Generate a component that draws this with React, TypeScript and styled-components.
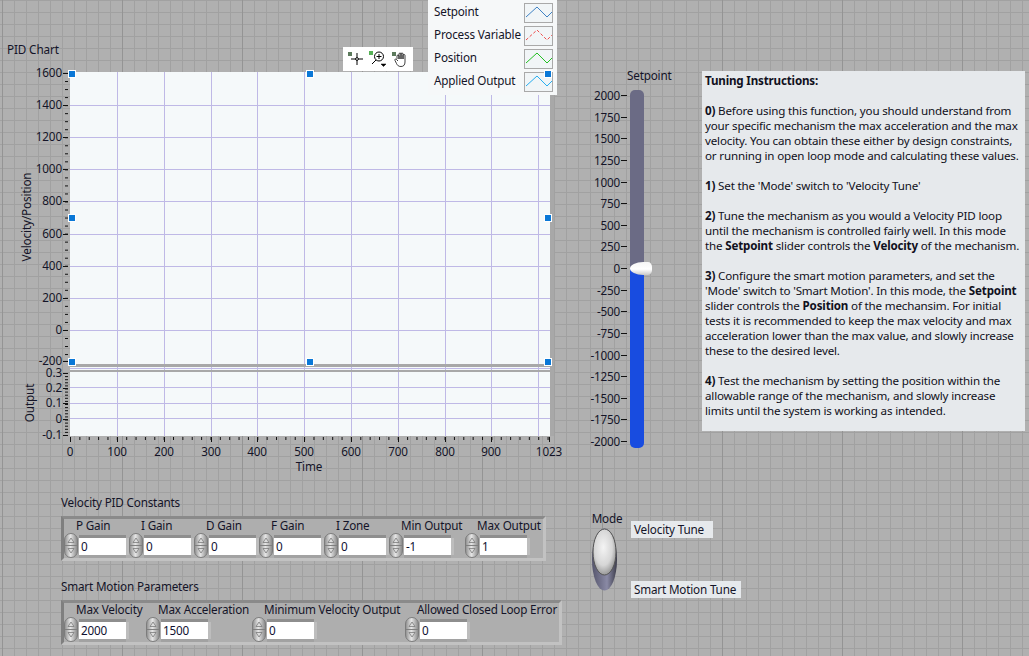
import React from "react";
import styled, { createGlobalStyle } from "styled-components";

const FONT = `"Noto Sans", "Open Sans", "Liberation Sans", sans-serif`;

const Global = createGlobalStyle`
  html, body { margin: 0; padding: 0; width: 1029px; height: 656px; overflow: hidden; }
  #root { width: 1029px; height: 656px; }
`;

const Panel = styled.main`
  position: relative;
  width: 1029px;
  height: 656px;
  overflow: hidden;
  color: #141428;
  font-family: ${FONT};
  font-size: 11.7px;
  letter-spacing: -0.18px;
  line-height: 15px;
  background-color: #b0b0b0;
  background-image:
    linear-gradient(to right, #949494 1px, transparent 1px),
    linear-gradient(to right, #a1a1a1 1px, transparent 1px),
    linear-gradient(to bottom, #a1a1a1 1px, transparent 1px);
  background-size: 120px 100%, 12px 12px, 12px 12px;
  background-position: 2px 0, 2px 0, 0 0;
`;

const ChartCanvas = styled.svg`
  position: absolute;
  left: 0;
  top: 40px;
  width: 565px;
  height: 440px;
  font-family: ${FONT};
  font-size: 11.7px;
  letter-spacing: -0.12px;
  fill: #141428;
`;

const HandleLayer = styled.svg`
  position: absolute;
  left: 0;
  top: 0;
  width: 565px;
  height: 370px;
  pointer-events: none;
`;

const Palette = styled.div`
  position: absolute;
  left: 343px;
  top: 47px;
  width: 70px;
  height: 24px;
  background: #ffffff;
  display: flex;
  align-items: center;
  justify-content: space-around;
  padding: 0 2px;
  box-sizing: border-box;
`;

const Legend = styled.div`
  position: absolute;
  left: 428px;
  top: 0;
  width: 129px;
  height: 95px;
  background: #f6f8f9;
  display: flex;
  flex-direction: column;
  box-sizing: border-box;
`;

const LegendRow = styled.div`
  height: 23px;
  display: flex;
  align-items: center;
  justify-content: space-between;
  padding: 0 4px 0 6px;
  white-space: nowrap;
`;

const LegendSwatch = styled.svg`
  width: 29px;
  height: 20px;
  flex: none;
  margin-top: 3px;
`;

const SliderBlock = styled.section`
  position: absolute;
  left: 580px;
  top: 68px;
  width: 100px;
  display: flex;
  flex-direction: column;
`;

const SliderTitle = styled.div`
  height: 15px;
  padding-left: 47px;
  margin-bottom: 7px;
`;

const SliderBody = styled.div`
  display: flex;
  height: 358px;
`;

const Scale = styled.div`
  width: 47px;
  margin: -2px 3px 0 0;
  height: 361px;
  display: flex;
  flex-direction: column;
  justify-content: space-between;
  align-items: flex-end;
`;

const ScaleRow = styled.div`
  height: 15px;
  display: flex;
  align-items: center;
  gap: 1px;
  &::after {
    content: "";
    width: 6px;
    height: 1px;
    background: #111;
  }
`;

const Track = styled.div`
  position: relative;
  width: 14px;
  height: 358px;
  display: flex;
  flex-direction: column;
`;

const TrackUpper = styled.div`
  flex: 1;
  background: #6b6b85;
  border-radius: 5px 5px 0 0;
`;

const TrackLower = styled.div`
  flex: 1;
  background: #184ce0;
  border-radius: 0 0 5px 5px;
`;

const Thumb = styled.div`
  position: absolute;
  left: 0;
  top: 172px;
  width: 22px;
  height: 13px;
  background: linear-gradient(to bottom, #f6f6f6 0%, #ffffff 55%, #c9c9c9 100%);
  border-radius: 60% 4px 4px 60% / 50% 5px 5px 50%;
`;

const Instructions = styled.section`
  position: absolute;
  left: 702px;
  top: 71px;
  width: 323px;
  height: 360px;
  box-sizing: border-box;
  padding: 2px 0 0 3px;
  background: #e6e9ec;
  font-size: 11.6px;
  letter-spacing: -0.17px;
  white-space: nowrap;
  color: #101020;
`;

const Para = styled.p`
  margin: 0 0 15px;
`;

const ClusterBlock = styled.section<{ $top: number; $width: number }>`
  position: absolute;
  left: 61px;
  top: ${(p) => p.$top}px;
  width: ${(p) => p.$width}px;
`;

const ClusterTitle = styled.div`
  height: 15px;
  margin-bottom: 6px;
`;

const ClusterFrame = styled.div`
  box-sizing: border-box;
  height: 45px;
  display: flex;
  background: #aeaeae;
  border-style: solid;
  border-width: 3px;
  border-color: #8a8a8a #c2c2c2 #c2c2c2 #7f7f7f;
`;

const Numeric = styled.div<{ $width: number }>`
  width: ${(p) => p.$width}px;
  flex: none;
  display: flex;
  flex-direction: column;
  margin-top: -1px;
`;

const NumericLabel = styled.div`
  height: 15px;
  padding-left: 12px;
  white-space: nowrap;
`;

const NumericRow = styled.div`
  display: flex;
  align-items: flex-start;
`;

const Spinner = styled.svg`
  width: 14px;
  height: 25px;
  flex: none;
  margin-right: 1px;
`;

const ValueBox = styled.div`
  box-sizing: border-box;
  width: 47px;
  height: 17px;
  margin-top: 5px;
  padding-left: 2px;
  background: #ffffff;
  line-height: 17px;
  color: #101030;
  box-shadow: 0 -3px 0 #8e8e8e, 3px 0 0 #bdbdbd, 0 3px 0 #a2a2a2;
`;

const ModeBlock = styled.section`
  position: absolute;
  left: 590px;
  top: 510px;
  width: 152px;
  height: 90px;
  display: grid;
  grid-template-columns: 41px 1fr;
  grid-template-rows: 18px 1fr;
`;

const ModeTitle = styled.div`
  grid-column: 1;
  grid-row: 1;
  text-align: center;
  padding-right: 7px;
  margin-top: 1px;
`;

const SwitchArt = styled.svg`
  grid-column: 1;
  grid-row: 2;
  width: 28px;
  height: 63px;
  margin-left: 1px;
`;

const ModeLabels = styled.div`
  grid-column: 2;
  grid-row: 1 / 3;
  display: flex;
  flex-direction: column;
  justify-content: space-between;
  align-items: flex-start;
  padding: 11px 0 2px;
`;

const ModeLabel = styled.div<{ $width: number }>`
  box-sizing: border-box;
  width: ${(p) => p.$width}px;
  height: 17px;
  line-height: 17px;
  padding-left: 3px;
  background: #e6e9ec;
  white-space: nowrap;
`;

const upperGrid = [105, 137, 169, 201, 234, 266, 298, 330];
const lowerGrid = [387, 403, 418];
const xLabels: [string, number][] = [
  ["0", 70], ["100", 117], ["200", 164], ["300", 211], ["400", 257], ["500", 304],
  ["600", 351], ["700", 398], ["800", 445], ["900", 491], ["1023", 549],
];
const yLabels: [string, number][] = [
  ["1600", 73], ["1400", 105], ["1200", 137], ["1000", 169], ["800", 201], ["600", 234],
  ["400", 266], ["200", 298], ["0", 330], ["-200", 361],
];
const y2Labels: [string, number][] = [["0.3", 373], ["0.2", 388], ["0.1", 403], ["0", 419], ["-0.1", 435]];

function Chart() {
  const xMinor: number[] = [];
  for (let v = 0; v <= 1023; v += 20) xMinor.push(70 + v * 0.4682);
  const yMinor: number[] = [];
  for (let i = 0; i < 36; i++) yMinor.push(73 + i * 8.03);
  const y2Minor: number[] = [];
  for (let i = 0; i < 20; i++) y2Minor.push(373 + i * 3.1);
  const grid = "#bfb9e6";
  return (
    <ChartCanvas viewBox="0 40 565 440">
      <text x={7} y={54}>PID Chart</text>
      <rect x={70} y={72} width={480} height={292} fill="#f5f9fa" />
      <rect x={70} y={372} width={480} height={64} fill="#f5f9fa" />
      <rect x={70} y={367} width={480} height={3} fill="#f5f9fa" />
      <rect x={70} y={364} width={480} height={3} fill="#a8a8a8" />
      <rect x={70} y={370} width={480} height={2} fill="#a8a8a8" />
      <rect x={70} y={368} width={480} height={1} fill={grid} />
      <rect x={550} y={72} width={4} height={364} fill="#a8a8a8" />
      {[...xLabels.slice(1, -1).map(([, x]) => x), 538].map((x) => (
        <g key={x} fill={grid}>
          <rect x={x} y={72} width={1} height={292} />
          <rect x={x} y={367} width={1} height={3} />
          <rect x={x} y={372} width={1} height={64} />
        </g>
      ))}
      {upperGrid.map((y) => <rect key={y} x={70} y={y} width={480} height={1} fill={grid} />)}
      {lowerGrid.map((y) => <rect key={y} x={70} y={y} width={480} height={1} fill={grid} />)}
      {yMinor.map((y) => <rect key={y} x={65} y={y} width={3} height={1} fill="#111" />)}
      {yLabels.map(([, y]) => <rect key={y} x={63} y={y} width={5} height={1} fill="#111" />)}
      {y2Minor.map((y) => <rect key={y} x={65} y={y} width={3} height={1} fill="#111" />)}
      {y2Labels.map(([, y]) => <rect key={y} x={63} y={y} width={5} height={1} fill="#111" />)}
      {xMinor.map((x) => <rect key={x} x={x} y={437} width={1} height={3} fill="#111" />)}
      {xLabels.map(([, x]) => <rect key={x} x={x} y={437} width={1} height={5} fill="#111" />)}
      {yLabels.map(([l, y]) => <text key={l} x={62} y={y + 4} textAnchor="end">{l}</text>)}
      {y2Labels.map(([l, y]) => <text key={l} x={62} y={y + 4} textAnchor="end">{l}</text>)}
      {xLabels.map(([l, x]) => <text key={l} x={x} y={456} textAnchor="middle">{l}</text>)}
      <text x={309} y={471} textAnchor="middle">Time</text>
      <text transform="translate(31 217) rotate(-90)" textAnchor="middle">Velocity/Position</text>
      <text transform="translate(34 403) rotate(-90)" textAnchor="middle">Output</text>
    </ChartCanvas>
  );
}

const legendItems = [
  { name: "Setpoint", color: "#3f82c4", dash: undefined },
  { name: "Process Variable", color: "#ef4a4a", dash: "3 2" },
  { name: "Position", color: "#22c022", dash: undefined },
  { name: "Applied Output", color: "#28aef0", dash: undefined },
];

function PaletteIcons() {
  return (
    <>
      <svg width="16" height="16" viewBox="0 0 16 16" fill="none">
        <rect x="0" y="1" width="4" height="4" fill="#5c7a5c" />
        <path d="M9 2v12M3 8h12" stroke="#000" />
        <circle cx="9" cy="8" r="1.4" fill="#fff" stroke="#000" />
      </svg>
      <svg width="18" height="18" viewBox="0 0 18 18" fill="none">
        <rect x="0" y="1" width="4" height="4" fill="#55b055" />
        <circle cx="10" cy="6.5" r="4.5" fill="#fff" stroke="#000" />
        <path d="M10 4v5M7.5 6.5h5M7 10l-4 4" stroke="#000" />
        <path d="M12 14h5l-2.5 2.5z" stroke="#000" fill="#000" strokeWidth=".5" />
      </svg>
      <svg width="17" height="17" viewBox="0 0 17 17" fill="none">
        <rect x="0" y="1" width="4" height="4" fill="#5c7a5c" />
        <path d="M5 8V5a1 1 0 0 1 2 0v3V3a1 1 0 0 1 2 0v5V3a1 1 0 0 1 2 0v5V4.500a1 1 0 0 1 2 0V11c0 3-1.500 4.500-4 4.500-2.500 0-3.500-1-4.500-3L3 9.500c-.7-1.200.8-2 1.500-1L6 10" stroke="#000" fill="#fff" strokeWidth=".75" />
      </svg>
    </>
  );
}

function SpinnerArt({ id }: { id: string }) {
  return (
    <Spinner viewBox="0 0 14 25">
      <defs>
        <linearGradient id={id} x1="0" x2="1" y1="0" y2="0">
          <stop offset="0" stopColor="#8c8c8c" />
          <stop offset=".45" stopColor="#e6e6e6" />
          <stop offset="1" stopColor="#868686" />
        </linearGradient>
      </defs>
      <rect x=".5" y=".5" width="13" height="24" rx="6.500" fill={`url(#${id})`} stroke="#7c7c7c" />
      <path d="M1 12.500h12" stroke="#808080" />
      <path d="M7 5l3 4.500H4z" fill="#dcdcdc" stroke="#6e6e6e" strokeWidth=".7" />
      <path d="M7 20l3-4.500H4z" fill="#dcdcdc" stroke="#6e6e6e" strokeWidth=".7" />
    </Spinner>
  );
}

type NumSpec = { label: string; value: string; width: number };
const velocity: NumSpec[] = [
  { label: "P Gain", value: "0", width: 65 },
  { label: "I Gain", value: "0", width: 65 },
  { label: "D Gain", value: "0", width: 65 },
  { label: "F Gain", value: "0", width: 65 },
  { label: "I Zone", value: "0", width: 65 },
  { label: "Min Output", value: "-1", width: 76 },
  { label: "Max Output", value: "1", width: 69 },
];
const smart: NumSpec[] = [
  { label: "Max Velocity", value: "2000", width: 82 },
  { label: "Max Acceleration", value: "1500", width: 106 },
  { label: "Minimum Velocity Output", value: "0", width: 153 },
  { label: "Allowed Closed Loop Error", value: "0", width: 149 },
];

function Cluster({ title, items, top, width, prefix }: { title: string; items: NumSpec[]; top: number; width: number; prefix: string }) {
  return (
    <ClusterBlock $top={top} $width={width}>
      <ClusterTitle>{title}</ClusterTitle>
      <ClusterFrame>
        {items.map((n, i) => (
          <Numeric key={n.label} $width={n.width}>
            <NumericLabel>{n.label}</NumericLabel>
            <NumericRow>
              <SpinnerArt id={`${prefix}${i}`} />
              <ValueBox>{n.value}</ValueBox>
            </NumericRow>
          </Numeric>
        ))}
      </ClusterFrame>
    </ClusterBlock>
  );
}

const scale = [2000, 1750, 1500, 1250, 1000, 750, 500, 250, 0, -250, -500, -750, -1000, -1250, -1500, -1750, -2000];
const handles: [number, number][] = [
  [72, 74], [310, 74], [548, 74], [72, 218], [548, 218], [72, 362], [310, 362], [548, 362],
];

export default function App() {
  return (
    <Panel>
      <Global />
      <Chart />
      <Palette><PaletteIcons /></Palette>
      <Legend>
        {legendItems.map((l) => (
          <LegendRow key={l.name}>
            <span>{l.name}</span>
            <LegendSwatch viewBox="0 0 29 20">
              <rect x=".5" y=".5" width="28" height="19" fill="#f1f5f7" stroke="#a9a9a9" />
              <path d="M2 14L13 4l10 10 5-5" fill="none" stroke={l.color} strokeDasharray={l.dash} />
            </LegendSwatch>
          </LegendRow>
        ))}
      </Legend>
      <HandleLayer viewBox="0 0 565 370">
        {handles.map(([x, y]) => (
          <rect key={`${x}-${y}`} x={x - 3.5} y={y - 3.5} width={7} height={7} fill="#0a78d7" stroke="#fff" />
        ))}
      </HandleLayer>

      <SliderBlock>
        <SliderTitle>Setpoint</SliderTitle>
        <SliderBody>
          <Scale>
            {scale.map((v) => <ScaleRow key={v}>{v}</ScaleRow>)}
          </Scale>
          <Track>
            <TrackUpper />
            <TrackLower />
            <Thumb />
          </Track>
        </SliderBody>
      </SliderBlock>

      <Instructions>
        <Para><b>Tuning Instructions:</b></Para>
        <Para>
          <b>0)</b> Before using this function, you should understand from<br />
          your specific mechanism the max acceleration and the max<br />
          velocity. You can obtain these either by design constraints,<br />
          or running in open loop mode and calculating these values.
        </Para>
        <Para><b>1)</b> Set the 'Mode' switch to 'Velocity Tune'</Para>
        <Para>
          <b>2)</b> Tune the mechanism as you would a Velocity PID loop<br />
          until the mechanism is controlled fairly well. In this mode<br />
          the <b>Setpoint</b> slider controls the <b>Velocity</b> of the mechanism.
        </Para>
        <Para>
          <b>3)</b> Configure the smart motion parameters, and set the<br />
          'Mode' switch to 'Smart Motion'. In this mode, the <b>Setpoint</b><br />
          slider controls the <b>Position</b> of the mechansim. For initial<br />
          tests it is recommended to keep the max velocity and max<br />
          acceleration lower than the max value, and slowly increase<br />
          these to the desired level.
        </Para>
        <Para>
          <b>4)</b> Test the mechanism by setting the position within the<br />
          allowable range of the mechanism, and slowly increase<br />
          limits until the system is working as intended.
        </Para>
      </Instructions>

      <Cluster title="Velocity PID Constants" items={velocity} top={495} width={485} prefix="v" />
      <Cluster title="Smart Motion Parameters" items={smart} top={579} width={501} prefix="s" />

      <ModeBlock>
        <ModeTitle>Mode</ModeTitle>
        <SwitchArt viewBox="0 0 28 63">
          <defs>
            <radialGradient id="knob" cx=".45" cy=".4" r=".65">
              <stop offset="0" stopColor="#f4f4f4" />
              <stop offset=".6" stopColor="#d6d6d6" />
              <stop offset="1" stopColor="#8a8a8a" />
            </radialGradient>
            <linearGradient id="base" x1="0" x2="1" y1="0" y2="0">
              <stop offset="0" stopColor="#55556c" />
              <stop offset=".6" stopColor="#8a8aa5" />
              <stop offset="1" stopColor="#3c3c4a" />
            </linearGradient>
          </defs>
          <ellipse cx="13.500" cy="31.500" rx="12.500" ry="31" fill="url(#base)" />
          <ellipse cx="13.500" cy="24" rx="11.500" ry="23" fill="url(#knob)" stroke="#555" strokeWidth="1" />
        </SwitchArt>
        <ModeLabels>
          <ModeLabel $width={82}>Velocity Tune</ModeLabel>
          <ModeLabel $width={110}>Smart Motion Tune</ModeLabel>
        </ModeLabels>
      </ModeBlock>
    </Panel>
  );
}
